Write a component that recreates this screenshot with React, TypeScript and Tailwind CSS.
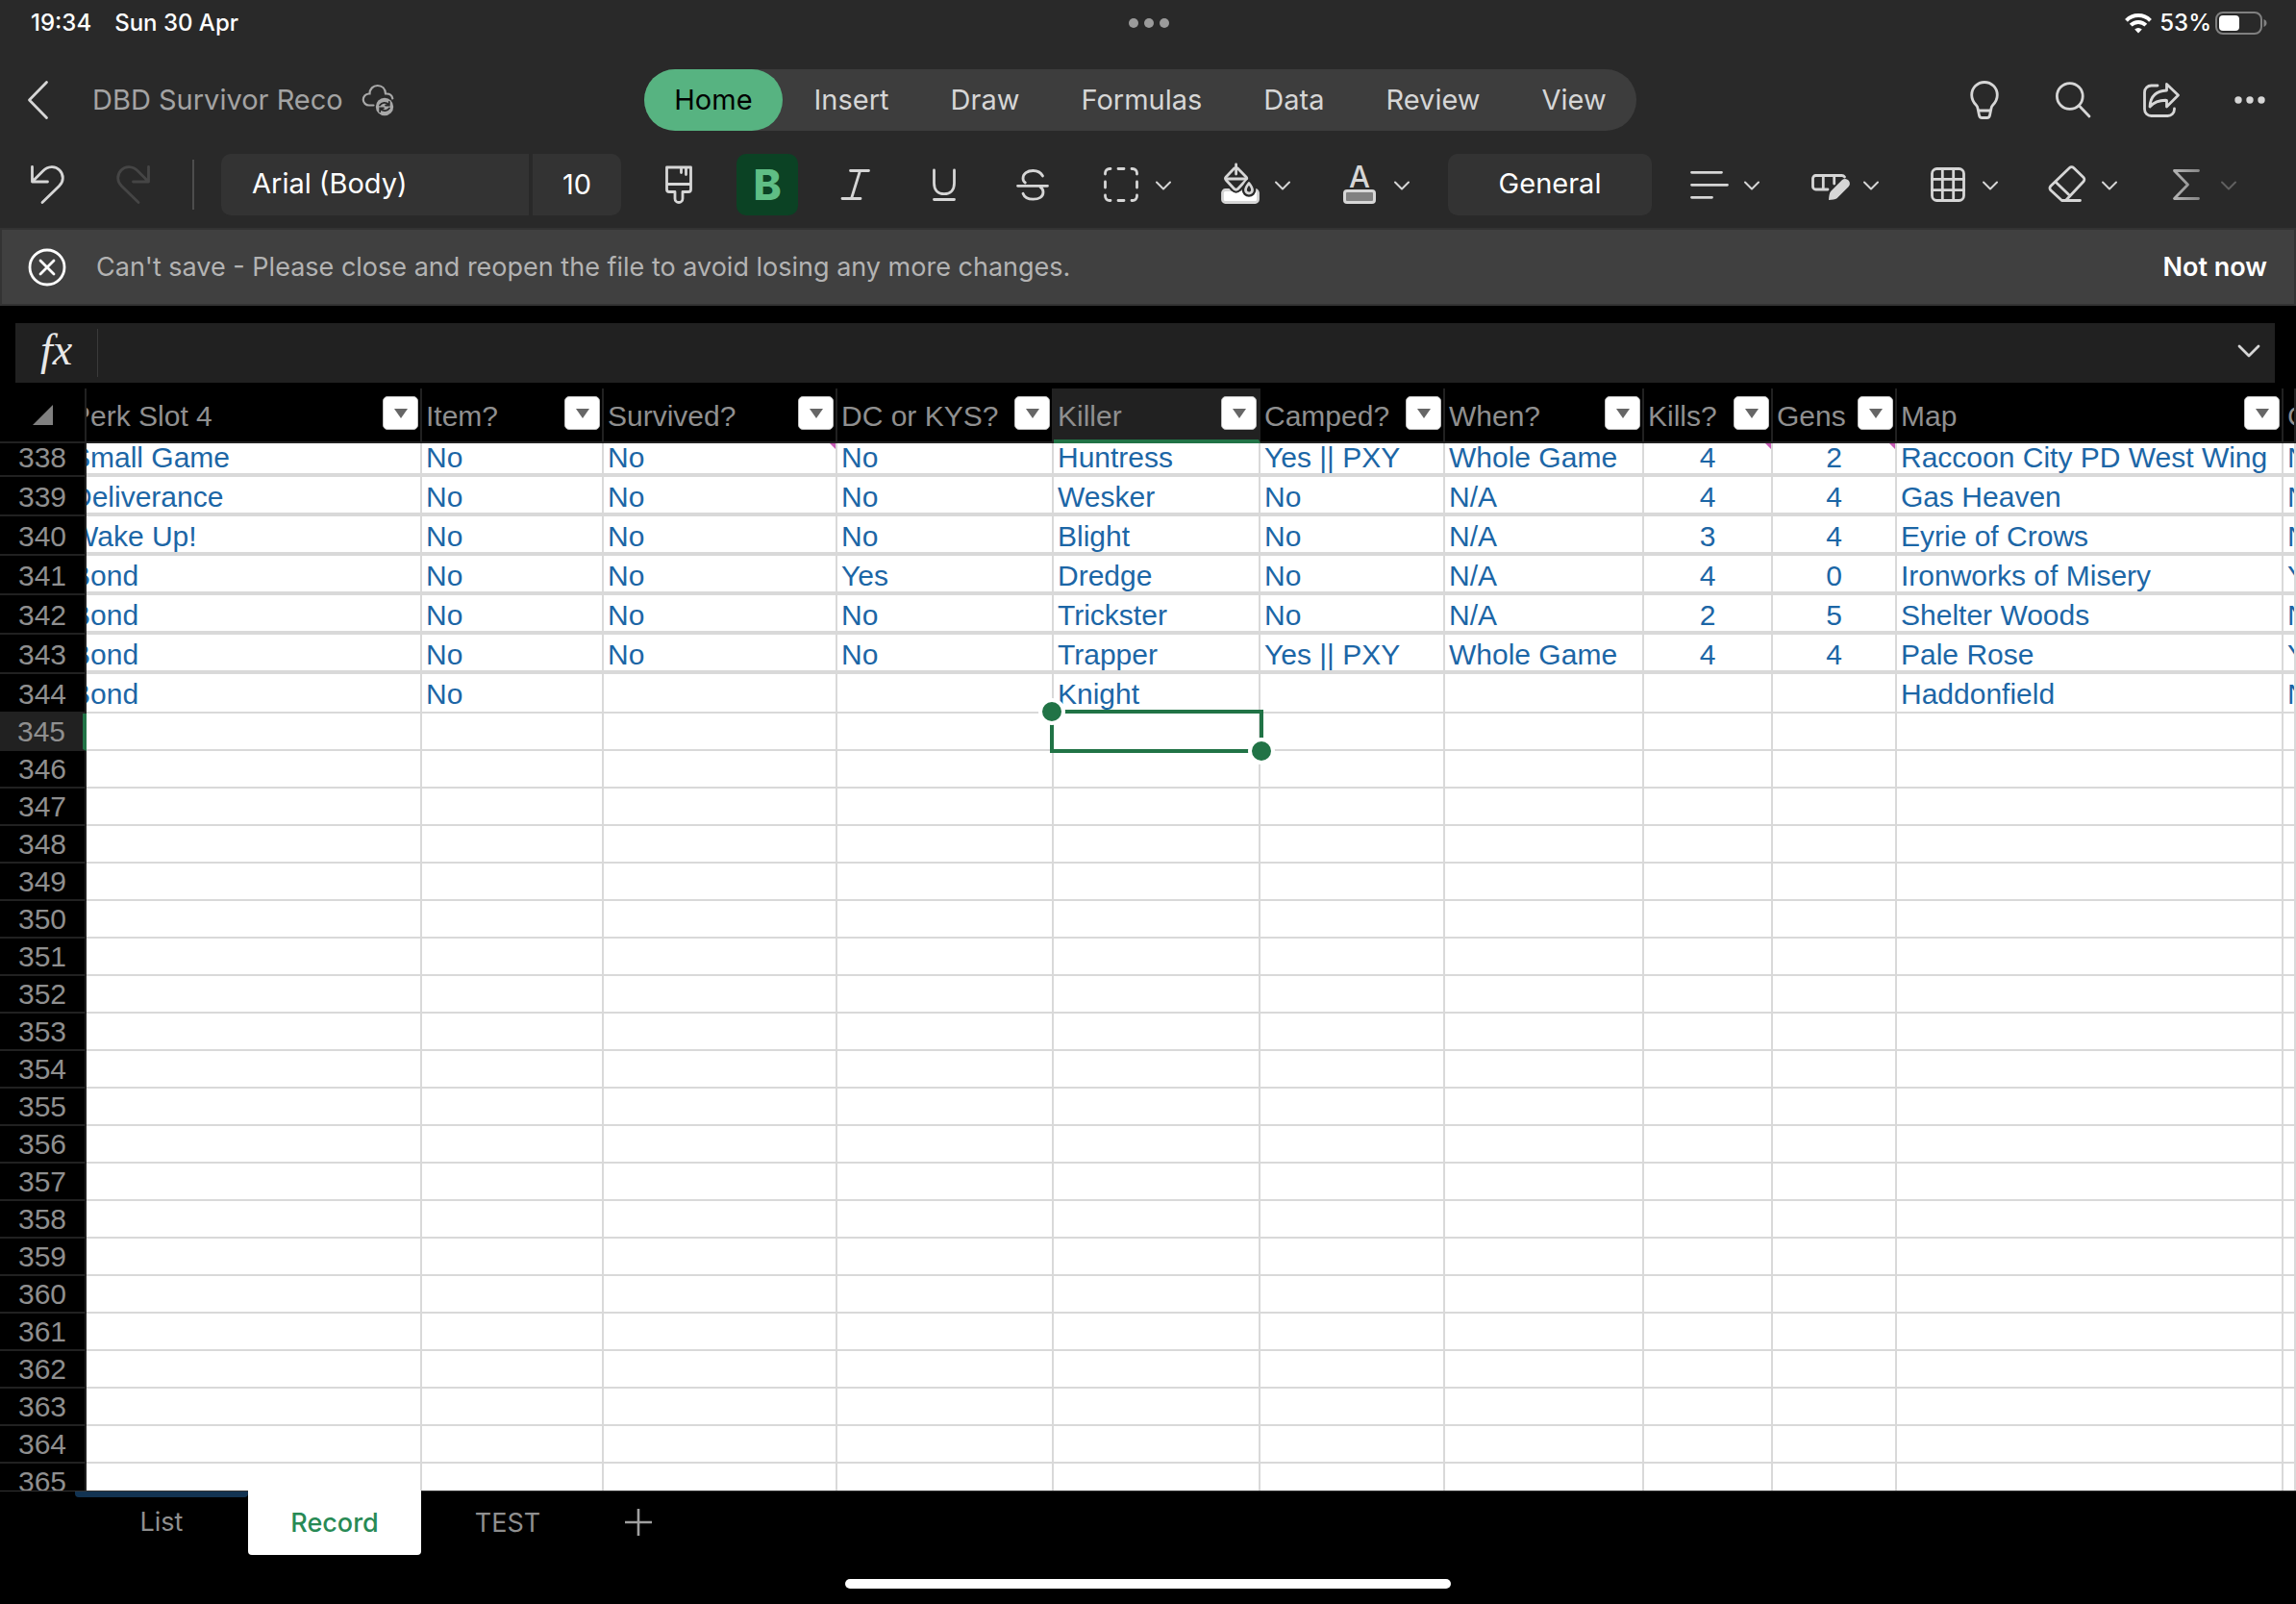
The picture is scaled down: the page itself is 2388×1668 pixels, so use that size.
import React from "react";

const UI = "font-[Inter,'Noto_Sans',sans-serif]";
const SHEET = "font-['Liberation_Sans',Arial,sans-serif]";

function Icon({ children, className = "" }: { children: React.ReactNode; className?: string }) {
  return (
    <svg
      viewBox="0 0 40 40"
      aria-hidden="true"
      className={"size-10 shrink-0 overflow-visible " + className}
      fill="none"
      stroke="currentColor"
      strokeWidth="2.8"
      strokeLinecap="round"
      strokeLinejoin="round"
    >
      {children}
    </svg>
  );
}

function Chevron() {
  return (
    <svg viewBox="0 0 16 16" aria-hidden="true" className="size-4 shrink-0 overflow-visible" fill="none" stroke="currentColor" strokeWidth="2" strokeLinecap="round" strokeLinejoin="round">
      <path d="M1 5.5L8 12.5 15 5.5" />
    </svg>
  );
}

function StatusBar() {
  return (
    <div className="grid h-12 grid-cols-3 items-center pl-8 pr-[30px] text-[24px] font-medium leading-8 text-white">
      <div className="flex gap-6">
        <span>19:34</span>
        <span>Sun 30 Apr</span>
      </div>
      <div className="flex justify-center gap-1.5">
        <span className="size-2.5 rounded-full bg-[#9b9b9b]" />
        <span className="size-2.5 rounded-full bg-[#9b9b9b]" />
        <span className="size-2.5 rounded-full bg-[#9b9b9b]" />
      </div>
      <div className="flex items-center justify-end">
        <svg viewBox="0 0 28 21" className="mr-2 h-[21px] w-7" fill="none" stroke="#fff" strokeWidth="4" aria-label="Wi-Fi" role="img">
          <path d="M1.5 7.3a17.6 17.6 0 0 1 25 0" />
          <path d="M6.2 12.2a11 11 0 0 1 15.6 0" />
          <path d="M14 20.5l-3.8-4a5.3 5.3 0 0 1 7.6 0Z" fill="#fff" stroke="none" />
        </svg>
        <span>53%</span>
        <svg viewBox="0 0 54 24" className="ml-1 h-6 w-[54px]" aria-label="Battery" role="img">
          <rect x="1" y="1" width="47" height="22" rx="7" fill="none" stroke="#808080" strokeWidth="2" />
          <rect x="4" y="4" width="21" height="16" rx="4" fill="#fff" />
          <path d="M50.5 8c2 .7 3 2.3 3 4s-1 3.300-3 4Z" fill="#808080" />
        </svg>
      </div>
    </div>
  );
}

const ribbonTabs = ["Home", "Insert", "Draw", "Formulas", "Data", "Review", "View"];

function TitleBar() {
  return (
    <header className="grid h-28 grid-cols-[1fr_auto_1fr] items-center pl-3 pr-7">
      <div className="flex items-center">
        <button aria-label="Back" className="text-[#d6d6d6]">
          <Icon>
            <path d="M36.500 1.500L18.500 20 36.500 38.500" />
          </Icon>
        </button>
        <span className="ml-11 text-[29px] leading-9 text-[#a3a3a3]">DBD Survivor Reco</span>
        <svg viewBox="6 8 32 32" className="ml-5 size-8 overflow-visible" fill="none" stroke="#a8a8a8" strokeWidth="2.200" strokeLinecap="round" aria-label="Sync pending" role="img">
          <path d="M17.500 29.500H13a6 6 0 0 1-.5-12h1C13.500 12.500 17 9 21.700 9s8 3.500 8.300 8.500h1c3.300 0 5.800 2 6.300 5" />
          <circle cx="29" cy="31" r="9.200" fill="#a8a8a8" stroke="none" />
          <path d="M24 29.500c2-3 6.500-3.500 9-.8M33.800 25.800v3.700h-3.700M34 32.500c-2 3-6.500 3.500-9 .8M24.200 36.200v-3.700h3.700" stroke="#292929" strokeWidth="1.800" />
        </svg>
      </div>
      <nav className="flex h-16 items-center gap-0.5 rounded-full bg-[#3d3d3d] text-[29px] leading-9 text-[#d6d6d6]">
        {ribbonTabs.map((t) =>
          t === "Home" ? (
            <button key={t} aria-current="page" className="h-16 rounded-full bg-[#57b381] px-[31px] text-black">
              {t}
            </button>
          ) : (
            <button key={t} className="h-16 rounded-full px-[31px]">
              {t}
            </button>
          )
        )}
      </nav>
      <div className="flex items-center justify-end gap-[52px] text-[#d6d6d6]">
        <button aria-label="Tell me">
          <Icon>
            <path d="M20 1.500A13.300 13.300 0 0 0 6.700 14.700c0 4.500 2 8 5 11 .8.8 1.100 2 1.300 3l1.500 7.300a3 3 0 0 0 3 2.500h5a3 3 0 0 0 3-2.500l1.500-7.300c.2-1 .5-2.200 1.300-3 3-3 5-6.500 5-11A13.300 13.300 0 0 0 20 1.500ZM13.500 31h13" />
          </Icon>
        </button>
        <button aria-label="Search">
          <Icon>
            <circle cx="16.800" cy="16" r="13.400" />
            <path d="M26.500 26L37 37" />
          </Icon>
        </button>
        <button aria-label="Share">
          <Icon>
            <path d="M16 5H9.500a7 7 0 0 0-7 7v17.500a7 7 0 0 0 7 7h17a7 7 0 0 0 7-7V29" />
            <path d="M25.500 3.500L37.500 15 25.500 27v-6.700C18 20 13 21.500 8 27 8.500 17 14 10.500 25.500 10Z" />
          </Icon>
        </button>
        <button aria-label="More">
          <Icon>
            <g fill="currentColor" stroke="none">
              <circle cx="8" cy="20" r="3.700" />
              <circle cx="20" cy="20" r="3.700" />
              <circle cx="32" cy="20" r="3.700" />
            </g>
          </Icon>
        </button>
      </div>
    </header>
  );
}

function FormatButton({ label, children }: { label: string; children: React.ReactNode }) {
  return (
    <button aria-label={label} className="flex h-16 w-16 items-center justify-center">
      <Icon>{children}</Icon>
    </button>
  );
}

function MenuButton({ label, children, dim = false }: { label: string; children: React.ReactNode; dim?: boolean }) {
  return (
    <button aria-label={label} aria-haspopup="menu" className="flex h-16 items-center gap-4">
      {children}
      <span className={dim ? "text-[#606060]" : ""}>
        <Chevron />
      </span>
    </button>
  );
}

function Toolbar() {
  return (
    <div className="flex h-[77px] items-start pl-[29px] text-[#d6d6d6]">
      <div className="flex h-16 items-center gap-[50px]">
        <button aria-label="Undo">
          <Icon>
            <path d="M4.500 1.500V17h16M4.500 17L15.500 6C21 .5 28.500.2 33 5s4.500 11.500-.5 16.500L15 38.500" />
          </Icon>
        </button>
        <button aria-label="Redo" disabled className="text-[#454545]">
          <Icon>
            <path d="M35.500 1.500V17h-16M35.500 17L24.500 6C19 .5 11.500.2 7 5s-4.500 11.500.5 16.500L25 38.500" />
          </Icon>
        </button>
      </div>
      <span className="ml-[41px] mr-7 mt-1.5 h-[52px] w-0.5 bg-[#4d4d4d]" />
      <div className="flex gap-1 text-[29px] leading-9 text-white">
        <button className="h-16 w-80 rounded-l-[10px] bg-[#333] pb-0.5 pl-8 text-left">Arial (Body)</button>
        <button className="h-16 w-[92px] rounded-r-[10px] bg-[#333]">10</button>
      </div>
      <div className="ml-7 flex gap-7">
        <FormatButton label="Format painter">
          <path d="M7.500 2h25v23a2.500 2.500 0 0 1-2.500 2.500h-6v7a4 4 0 0 1-8 0v-7h-6A2.500 2.500 0 0 1 7.500 25ZM7.500 19.500h25M22.500 2v5.500M27.500 2v7.500" />
        </FormatButton>
        <button aria-label="Bold" aria-pressed="true" className="flex h-16 w-16 items-center justify-center rounded-[10px] bg-[#0b4224] text-[44px] font-extrabold leading-none text-[#5fbe85]">
          B
        </button>
        <FormatButton label="Italic">
          <path d="M14.500 5.500h19M6 34.500h19M24.500 5.500L15.500 34.500" />
        </FormatButton>
        <FormatButton label="Underline">
          <path d="M9.500 5v13.500c0 7 4 11.200 10.500 11.200s10.500-4.200 10.500-11.200V5M9.500 35.500h21" />
        </FormatButton>
        <FormatButton label="Strikethrough">
          <path d="M4.500 21.300h31M30.500 11C28.500 7.300 25 5.500 20.500 5.500c-6 0-10.500 3-10.500 8 0 2 .8 3.500 2.300 4.500M28 22.500c2 1.200 3 3 3 5.200 0 5-4.500 7.500-10.500 7.500-5 0-9-2-10.500-6" />
        </FormatButton>
      </div>
      <div className="ml-10 flex gap-[52px]">
        <MenuButton label="Borders">
          <Icon>
            <path d="M3.500 9V8a4.500 4.500 0 0 1 4.500-4.500h1M31 3.500h1A4.500 4.500 0 0 1 36.500 8v1M36.500 31v1a4.500 4.500 0 0 1-4.500 4.500h-1M9 36.500H8A4.500 4.500 0 0 1 3.500 32v-1M17 3.500h6M17 36.500h6M3.500 17v6M36.500 17v6" />
          </Icon>
        </MenuButton>
        <MenuButton label="Fill colour">
          <Icon>
            <rect x="1.500" y="25.500" width="37" height="13" rx="3" fill="#fff" />
            <path d="M14 2.800L5.200 12a2.500 2.500 0 0 0 0 3.300l8.300 9a2.800 2.800 0 0 0 4.200 0l8.300-9a2.500 2.500 0 0 0 0-3.300L17 2.800Z" stroke="#292929" strokeWidth="7" />
            <path d="M14 2.800L5.200 12a2.500 2.500 0 0 0 0 3.300l8.300 9a2.800 2.800 0 0 0 4.200 0l8.300-9a2.500 2.500 0 0 0 0-3.300L17 2.800Z" fill="#292929" />
            <path d="M15.600-1v10M5.500 14h20" />
            <path d="M29 18.500c2 2.500 3.500 4.500 3.500 7a3.500 3.500 0 0 1-7 0c0-2.500 1.500-4.500 3.500-7Z" stroke="#292929" strokeWidth="7.500" />
            <path d="M29 18.500c2 2.500 3.500 4.500 3.500 7a3.500 3.500 0 0 1-7 0c0-2.500 1.500-4.500 3.500-7Z" fill="#292929" />
          </Icon>
        </MenuButton>
        <MenuButton label="Font colour">
          <span className="flex size-10 flex-col items-center justify-between">
            <span className="text-[31px] font-medium leading-6">A</span>
            <span className="h-[15px] w-[34px] rounded-[4px] border-[3px] border-[#d6d6d6] bg-[#808080]" />
          </span>
        </MenuButton>
      </div>
      <button className="mx-10 h-16 w-[212px] rounded-[10px] bg-[#333] pb-0.5 text-[29px] leading-9 text-white">General</button>
      <div className="flex gap-[52px]">
        <MenuButton label="Alignment">
          <Icon>
            <path d="M1.500 7.300h31M1.500 20.300h37M1.500 33.300h21" />
          </Icon>
        </MenuButton>
        <MenuButton label="Cell styles">
          <Icon>
            <path d="M36.500 12q-1-1.500-3-1.500h-27a3 3 0 0 0-3 3V22a3 3 0 0 0 3 3H19M14.300 10.500V25M25.700 10.500V19" />
            <path d="M40.500 15.500a4.800 4.800 0 0 0-6.700-.2L22.500 26.500C20.500 28.500 20.300 32.500 20 36c3.300-.2 7-.6 8.500-1.700L40.500 22.300a4.800 4.800 0 0 0 0-6.800Z" fill="currentColor" stroke="none" />
          </Icon>
        </MenuButton>
        <MenuButton label="Table">
          <Icon>
            <rect x="3.500" y="3.500" width="33" height="33" rx="5" />
            <path d="M14.300 3.500v33M25.700 3.500v33M3.500 14.300h33M3.500 25.700h33" />
          </Icon>
        </MenuButton>
        <MenuButton label="Clear">
          <Icon>
            <path d="M22.500 2.500a3 3 0 0 1 4.200 0L37 12.500a3 3 0 0 1 0 4.200L18.500 36.500h-4L2.800 25.700a3 3 0 0 1 0-4.200ZM8 17.300l13.500 13M14.500 36.500H33.500" />
          </Icon>
        </MenuButton>
        <MenuButton label="AutoSum" dim>
          <Icon>
            <defs>
              <linearGradient id="fade" gradientUnits="userSpaceOnUse" x1="6" y1="0" x2="36" y2="0">
                <stop offset="0" stopColor="#b4b4b4" />
                <stop offset="1" stopColor="#828282" />
              </linearGradient>
            </defs>
            <path d="M32.500 5.500H7.500L21.500 20 7.500 34.500h25" stroke="url(#fade)" />
          </Icon>
        </MenuButton>
      </div>
    </div>
  );
}

function Banner() {
  return (
    <div role="alert" className="flex h-[81px] items-center justify-between border-2 border-[#333] bg-[#404040] pl-[27px] pr-7 text-[27px] leading-8">
      <div className="flex items-center gap-[31px]">
        <Icon className="text-white">
          <circle cx="20" cy="20" r="18" />
          <path d="M13 13l14 14M27 13L13 27" />
        </Icon>
        <span className="text-[#b3b3b3]">Can't save - Please close and reopen the file to avoid losing any more changes.</span>
      </div>
      <button className="font-semibold text-white">Not now</button>
    </div>
  );
}

function FormulaBar() {
  return (
    <div className="bg-black pb-1.5 pl-4 pr-[22px] pt-[18px]">
      <div className="flex h-[62px] items-center bg-[#212121] text-[#e8e8e8]">
        <label htmlFor="formula" className="w-[85px] pb-1.5 text-center font-['Liberation_Serif',serif] text-[46px] italic leading-none">
          fx
        </label>
        <input id="formula" className="h-[50px] min-w-0 flex-1 border-l border-[#3a3a3a] bg-transparent px-4 text-[28px] outline-none" />
        <button aria-label="Expand formula bar" className="mr-[15px] pb-1 text-[#d6d6d6]">
          <svg viewBox="0 0 24 24" className="size-6" fill="none" stroke="currentColor" strokeWidth="2.800" strokeLinecap="round" strokeLinejoin="round" aria-hidden="true">
            <path d="M2 7l10 10 10-10" />
          </svg>
        </button>
      </div>
    </div>
  );
}

const columns = ["Perk Slot 4", "Item?", "Survived?", "DC or KYS?", "Killer", "Camped?", "When?", "Kills?", "Gens", "Map", "C"];
const NOTED = [2, 7, 8];

const records: string[][] = [
  ["Small Game", "No", "No", "No", "Huntress", "Yes || PXY", "Whole Game", "4", "2", "Raccoon City PD West Wing", "No"],
  ["Deliverance", "No", "No", "No", "Wesker", "No", "N/A", "4", "4", "Gas Heaven", "No"],
  ["Wake Up!", "No", "No", "No", "Blight", "No", "N/A", "3", "4", "Eyrie of Crows", "No"],
  ["Bond", "No", "No", "Yes", "Dredge", "No", "N/A", "4", "0", "Ironworks of Misery", "Yes"],
  ["Bond", "No", "No", "No", "Trickster", "No", "N/A", "2", "5", "Shelter Woods", "No"],
  ["Bond", "No", "No", "No", "Trapper", "Yes || PXY", "Whole Game", "4", "4", "Pale Rose", "Yes"],
  ["Bond", "No", "", "", "Knight", "", "", "", "", "Haddonfield", "No"],
];

const FIRST_ROW = 338;
const LAST_ROW = 365;
const ACTIVE_ROW = 345;
const ACTIVE_COL = 4;

function HeaderCell({ name, index }: { name: string; index: number }) {
  const active = index === ACTIVE_COL;
  return (
    <th scope="col" className={active ? "border-b-4 border-r-2 border-b-[#217346] border-r-[#212121] bg-[#212121] p-0" : "border-b-2 border-r-2 border-[#212121] p-0"}>
      <div className={active ? "flex h-[53px] items-end justify-between overflow-hidden pb-2 pl-1" : "flex h-[55px] items-end justify-between overflow-hidden pb-2.5 pl-1"}>
        <span className={index === 0 ? "-ml-5 whitespace-nowrap" : "whitespace-nowrap"}>{name}</span>
        {index < 10 && (
          <button aria-label={"Filter " + name} className="mb-0.5 mr-0.5 flex h-[35px] w-[37px] shrink-0 items-center justify-center rounded-[5px] border border-[#bfbfbf] bg-white">
            <svg viewBox="0 0 14 10" className="h-2.5 w-3.5" aria-hidden="true">
              <path d="M0 0h14L7 10Z" fill="#666" />
            </svg>
          </button>
        )}
      </div>
    </th>
  );
}

function SelectionBox() {
  return (
    <div className="absolute -left-1 -top-1 z-10 h-[45px] w-[calc(100%+9px)] border-4 border-[#217346]">
      <span className="absolute -left-[16px] -top-[16px] size-7 rounded-full border-4 border-white bg-[#217346]" />
      <span className="absolute -bottom-[16px] -right-[16px] size-7 rounded-full border-4 border-white bg-[#217346]" />
    </div>
  );
}

function SheetRow({ n }: { n: number }) {
  const data = records[n - FIRST_ROW] ?? [];
  const boxed = n < 344;
  const cellHeight = n === FIRST_ROW ? "h-[31px]" : n <= 344 ? (boxed ? "h-[37px]" : "h-[39px] pb-0.5") : "h-[37px] pb-0.5";
  const headHeight = n === FIRST_ROW ? "h-[33px] pb-0.5" : n <= 344 ? "h-[39px] pb-0.5" : "h-[37px] pb-0.5";
  return (
    <tr>
      <th
        scope="row"
        className={
          n === ACTIVE_ROW
            ? "border-b-2 border-r-4 border-b-[#212121] border-r-[#217346] bg-[#212121] p-0 text-[#8f8f8f]"
            : "border-b-2 border-r-2 border-[#212121] bg-black p-0 text-[#8f8f8f]"
        }
      >
        <div className={"flex items-end justify-center overflow-hidden " + headHeight}>{n}</div>
      </th>
      {columns.map((_, i) => (
        <td
          key={i}
          className={
            "relative border-r-2 border-[#d9d9d9] bg-white p-0 text-[#1c66a6] " + (boxed ? "border-b-4" : "border-b-2")
          }
        >
          <div className={"flex items-end overflow-hidden whitespace-nowrap " + cellHeight + (i === 7 || i === 8 ? " justify-center" : " pl-1")}>
            <span className={i === 0 ? "-ml-5" : ""}>{data[i] ?? ""}</span>
          </div>
          {n === FIRST_ROW && NOTED.includes(i) && (
            <span className="absolute right-0 top-0 size-1.5 bg-[#c65bb4] [clip-path:polygon(0_0,100%_0,100%_100%)]" />
          )}
          {n === ACTIVE_ROW && i === ACTIVE_COL && <SelectionBox />}
        </td>
      ))}
    </tr>
  );
}

function Sheet() {
  const rows = Array.from({ length: LAST_ROW - FIRST_ROW + 1 }, (_, i) => FIRST_ROW + i);
  return (
    <main className={"min-h-0 flex-1 overflow-hidden " + SHEET}>
      <table className="w-full table-fixed border-separate border-spacing-0 text-[30px] leading-8">
        <colgroup>
          <col className="w-[90px]" />
          <col className="w-[349px]" />
          <col className="w-[189px]" />
          <col className="w-[243px]" />
          <col className="w-[225px]" />
          <col className="w-[215px]" />
          <col className="w-[192px]" />
          <col className="w-[207px]" />
          <col className="w-[134px]" />
          <col className="w-[129px]" />
          <col className="w-[402px]" />
          <col />
        </colgroup>
        <thead className="bg-black text-left text-[#8f8f8f] [&_th]:font-normal">
          <tr>
            <th className="border-b-2 border-r-2 border-[#212121] p-0">
              <svg viewBox="0 0 21 21" className="ml-[34px] h-[21px] w-[21px]" aria-label="Select all" role="img">
                <path d="M21 0v21H0Z" fill="#808080" />
              </svg>
            </th>
            {columns.map((c, i) => (
              <HeaderCell key={c} name={c} index={i} />
            ))}
          </tr>
        </thead>
        <tbody className="[&_th]:font-normal">
          {rows.map((n) => (
            <SheetRow key={n} n={n} />
          ))}
        </tbody>
      </table>
    </main>
  );
}

function SheetTabs() {
  return (
    <footer className="h-[118px] shrink-0 bg-black">
      <div className="flex border-t border-[#333] pl-[78px] text-[27px] leading-8 text-[#8f8f8f]">
        <button className="flex h-[66px] w-[180px] flex-col items-center">
          <span className="h-1.5 w-full rounded-b-[4px] bg-[#123352]" />
          <span className="mt-2.5">List</span>
        </button>
        <button aria-current="page" className="-mt-px h-[67px] w-[180px] rounded-b-[4px] bg-white font-medium text-[#288a55]">
          Record
        </button>
        <button className="h-[66px] w-[180px]">TEST</button>
        <button aria-label="Add sheet" className="ml-8 flex h-[64px] items-center">
          <svg viewBox="0 0 28 28" className="size-7" fill="none" stroke="#a0a0a0" strokeWidth="2.600" aria-hidden="true">
            <path d="M14 0v28M0 14h28" />
          </svg>
        </button>
      </div>
      <div className="mx-auto mt-[25px] h-2.5 w-[630px] rounded-full bg-white" />
    </footer>
  );
}

export default function App() {
  return (
    <div className={"flex h-screen flex-col overflow-hidden bg-black " + UI}>
      <div className="bg-[#292929]">
        <StatusBar />
        <TitleBar />
        <Toolbar />
      </div>
      <Banner />
      <FormulaBar />
      <Sheet />
      <SheetTabs />
    </div>
  );
}
